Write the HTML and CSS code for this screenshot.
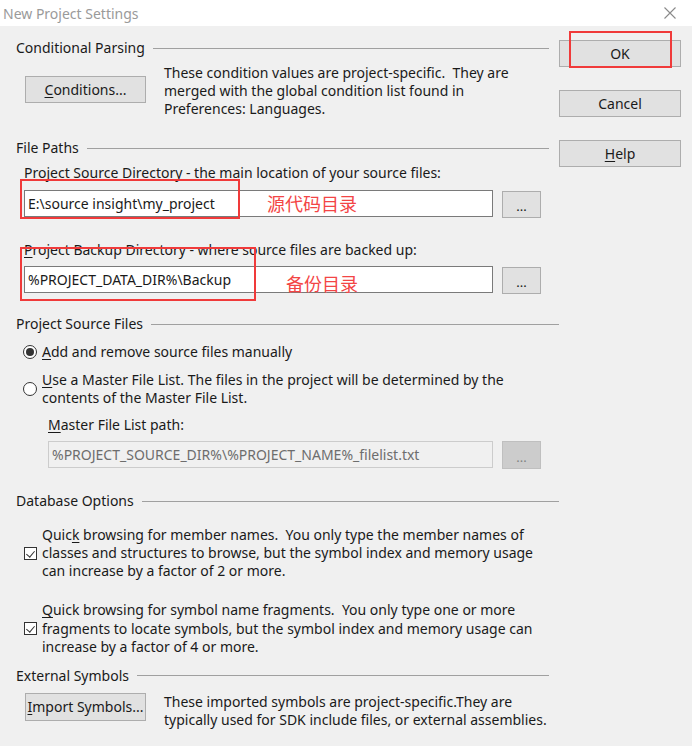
FILE: index.html
```html
<!DOCTYPE html>
<html lang="en">
<head>
  <meta charset="UTF-8" />
  <title>New Project Settings</title>
  <link rel="stylesheet" href="styles.css">
</head>
<body>

<div class="titlebar">
  <span class="title">New Project Settings</span>
  <svg class="close" width="12" height="12" viewBox="0 0 12 12">
    <path d="M0.5 0.5 L11.5 11.5 M11.5 0.5 L0.5 11.5" stroke="#8a8a8a" stroke-width="1.1" fill="none"/>
  </svg>
</div>

<div class="dialog">
  <div class="main">
    <!-- Conditional Parsing -->
    <div class="group g-cond"><span>Conditional Parsing</span><i class="rule short"></i></div>
    <div class="row-btn r-cond">
      <button class="btn wide"><u>C</u>onditions...</button>
      <p class="note">These condition values are project-specific.&nbsp; They are<br>merged with the global condition list found in<br>Preferences: Languages.</p>
    </div>

    <!-- File Paths -->
    <div class="group g-paths"><span>File Paths</span><i class="rule short"></i></div>
    <div class="label l-src">Project Source Directory - the main location of your source files:</div>
    <div class="field-row f-src">
      <div class="field">
        <input type="text" class="text" value="E:\source insight\my_project" />
        <span class="mark mark-src"></span>
        <span class="tag tag-src">源代码目录</span>
      </div>
      <button class="btn dots">...</button>
    </div>
    <div class="label l-bak"><u>P</u>roject Backup Directory - where source files are backed up:</div>
    <div class="field-row f-bak">
      <div class="field">
        <input type="text" class="text" value="%PROJECT_DATA_DIR%\Backup" />
        <span class="mark mark-bak"></span>
        <span class="tag tag-bak">备份目录</span>
      </div>
      <button class="btn dots">...</button>
    </div>

    <!-- Project Source Files -->
    <div class="group g-files"><span>Project Source Files</span><i class="rule"></i></div>
    <label class="opt o-add"><span class="radio on"></span><span><u>A</u>dd and remove source files manually</span></label>
    <label class="opt o-use"><span class="radio"></span><span><u>U</u>se a Master File List. The files in the project will be determined by the<br>contents of the Master File List.</span></label>
    <div class="label l-master"><u>M</u>aster File List path:</div>
    <div class="field-row f-master">
      <input type="text" class="text off" value="%PROJECT_SOURCE_DIR%\%PROJECT_NAME%_filelist.txt" disabled />
      <button class="btn dots off" disabled>...</button>
    </div>

    <!-- Database Options -->
    <div class="group g-db"><span>Database Options</span><i class="rule"></i></div>
    <label class="opt o-chk1"><span class="check"></span><span>Quic<u>k</u> browsing for member names.&nbsp; You only type the member names of<br>classes and structures to browse, but the symbol index and memory usage<br>can increase by a factor of 2 or more.</span></label>
    <label class="opt o-chk2"><span class="check"></span><span><u>Q</u>uick browsing for symbol name fragments.&nbsp; You only type one or more<br>fragments to locate symbols, but the symbol index and memory usage can<br>increase by a factor of 4 or more.</span></label>

    <!-- External Symbols -->
    <div class="group g-ext"><span>External Symbols</span><i class="rule short"></i></div>
    <div class="row-btn r-ext">
      <button class="btn wide"><u>I</u>mport Symbols...</button>
      <p class="note">These imported symbols are project-specific.They are<br>typically used for SDK include files, or external assemblies.</p>
    </div>
  </div>

  <div class="side">
    <div class="ok-wrap">
      <button class="btn side-btn">OK</button>
      <span class="mark mark-ok"></span>
    </div>
    <button class="btn side-btn">Cancel</button>
    <button class="btn side-btn"><u>H</u>elp</button>
  </div>
</div>

</body>
</html>
```

FILE: styles.css
```css
* {
  box-sizing: border-box;
  margin: 0;
  padding: 0;
}

body {
  width: 692px;
  height: 746px;
  background: #f0f0f0;
  font-family: "Noto Sans", "Noto Sans CJK SC", sans-serif;
  font-size: 14px;
  color: #1a1a1a;
  overflow: hidden;
}

u {
  text-decoration: underline;
  text-underline-offset: 2px;
}

.titlebar {
  height: 26px;
  background: #fff;
  display: flex;
  align-items: center;
  justify-content: space-between;
  padding: 0 16px 0 3px;
}

.title {
  color: #9a9a9a;
  font-size: 14px;
}

.close {
  margin-top: -1px;
}

.dialog {
  display: flex;
}

.main {
  width: 559px;
  padding-left: 16px;
}

/* group headers with a line */
.group {
  display: flex;
  align-items: center;
  height: 18px;
  line-height: 18px;
}

.group .rule {
  flex: 1;
  height: 0;
  border-top: 1px solid #a0a0a0;
  margin-left: 8px;
}

.group .rule.short {
  margin-right: 10px;
}

.g-cond { margin-top: 13px; }
.g-paths { margin-top: 21px; }
.g-files { margin-top: 21px; }
.g-db { margin-top: 23px; }
.g-ext { margin-top: 10px; }

/* buttons */
.btn {
  font-family: inherit;
  font-size: 14px;
  color: #1a1a1a;
  background: #e1e1e1;
  border: 1px solid #adadad;
  outline: none;
}

.btn.wide {
  width: 121px;
  height: 27px;
  margin-left: 9px;
  flex-shrink: 0;
}

.row-btn {
  display: flex;
  align-items: flex-start;
}

.row-btn .note {
  margin-left: 18px;
  line-height: 18px;
}

.r-cond { margin-top: 7px; }
.r-cond .btn { margin-top: 12px; }
.r-ext { margin-top: 8px; }
.r-ext .btn { height: 28px; }

.label {
  line-height: 18px;
  margin-left: 8px;
}

.l-src { margin-top: 7px; }
.l-bak { margin-top: 23px; }
.l-master { margin-top: 9px; margin-left: 32px; }

.field-row {
  display: flex;
  align-items: flex-start;
  margin-left: 8px;
}

.f-src { margin-top: 8px; }
.f-bak { margin-top: 7px; }
.f-master { margin-top: 7px; margin-left: 32px; }

.field {
  position: relative;
}

.text {
  width: 469px;
  height: 27px;
  border: 1px solid #7a7a7a;
  background: #fff;
  font-family: inherit;
  font-size: 14px;
  color: #1a1a1a;
  padding: 0 3px;
  outline: none;
}

.text.off {
  width: 445px;
  background: #f0f0f0;
  border-color: #cccccc;
  color: #6d6d6d;
}

.btn.dots {
  width: 39px;
  height: 27px;
  margin-left: 9px;
  margin-top: 1px;
  font-size: 13px;
  line-height: 1;
  padding-top: 4px;
}

.btn.dots.off {
  background: #cccccc;
  border-color: #bfbfbf;
  color: #838383;
  margin-top: 0;
  height: 28px;
}

/* red annotations */
.mark {
  position: absolute;
  border: 2px solid #f03a3a;
  pointer-events: none;
}

.mark-src { left: -4px; top: -11px; width: 220px; height: 40px; }
.mark-bak { left: -4px; top: -19px; width: 236px; height: 54px; }

.tag {
  position: absolute;
  color: #f34545;
  font-size: 18px;
  line-height: 20px;
  font-family: "Noto Sans CJK SC", sans-serif;
}

.tag-src { left: 243px; top: 3px; }
.tag-bak { left: 262px; top: 7px; }

/* radio and check options */
.opt {
  display: flex;
  align-items: center;
  line-height: 18px;
  margin-left: 8px;
}

.o-add { margin-top: 10px; }
.o-use { margin-top: 10px; }
.o-chk1 { margin-top: 16px; }
.o-chk2 { margin-top: 21px; line-height: 18.5px; }

.radio {
  width: 14px;
  height: 14px;
  border: 1px solid #333;
  border-radius: 50%;
  background: #fff;
  margin-left: -1px;
  margin-right: 5px;
  flex-shrink: 0;
  display: flex;
  align-items: center;
  justify-content: center;
}

.radio.on::after {
  content: "";
  width: 8px;
  height: 8px;
  border-radius: 50%;
  background: #333;
}

.check {
  width: 13px;
  height: 13px;
  border: 1px solid #333;
  background: #fff;
  margin-right: 5px;
  flex-shrink: 0;
  position: relative;
}

.check::after {
  content: "";
  position: absolute;
  left: 3px;
  top: 1px;
  width: 4px;
  height: 7px;
  border-right: 1px solid #333;
  border-bottom: 1px solid #333;
  transform: rotate(40deg);
}

/* right column */
.side {
  display: flex;
  flex-direction: column;
  gap: 23px;
  padding-top: 14px;
}

.ok-wrap {
  position: relative;
}

.btn.side-btn {
  width: 122px;
  height: 27px;
}

.mark-ok { left: 10px; top: -9px; width: 103px; height: 37px; }
```
